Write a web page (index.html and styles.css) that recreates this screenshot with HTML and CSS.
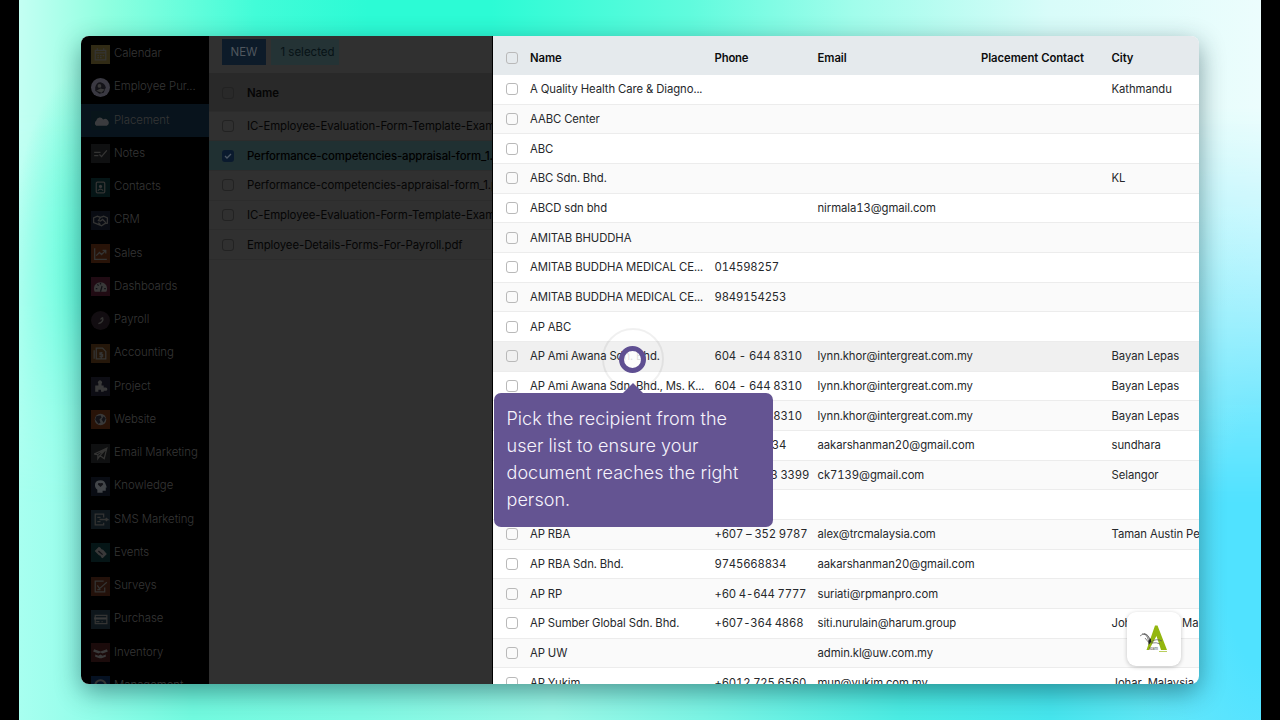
FILE: index.html
```
<!DOCTYPE html>
<html lang="en">
<head>
  <meta charset="UTF-8" />
  <meta name="viewport" content="width=device-width, initial-scale=1" />
  <title>Placement - Select Recipient</title>
  <link rel="stylesheet" href="styles.css">
</head>
<body>
  <div class="backdrop">
    <div class="window">
      <nav class="sidebar">
        <div class="nav-item"><svg class="icon olive" viewBox="0 0 18 18"><path d="M4 5h10v9H4zM6 3v2M12 3v2M4 7.500h10M6 10h1.500M8.500 10H10M11 10h1.500M6 12h1.500M8.500 12H10"/></svg><span>Calendar</span></div>
        <div class="nav-item"><svg class="icon round avatar" viewBox="0 0 18 18"><path class="dark" d="M4 9q1-5 5-5 4 1 5 5l-2 5-4 1-4-3z"/><circle class="fill" cx="8" cy="7.500" r="1.800"/><path class="fill" d="m5 12 4-2 4 1-3 3z"/></svg><span>Employee Pur...</span></div>
        <div class="nav-item active"><svg class="icon green" viewBox="0 0 18 18"><path class="fill" d="M5 14a3 3 0 0 1 0-5 3.500 3.500 0 0 1 6.500-1A3 3 0 0 1 15 14z"/></svg><span>Placement</span></div>
        <div class="nav-item"><svg class="icon grey" viewBox="0 0 18 18"><path d="M3 8h6M3 11h4M8 10l2 2 5-6"/></svg><span>Notes</span></div>
        <div class="nav-item"><svg class="icon teal" viewBox="0 0 18 18"><rect x="5" y="4" width="8" height="10" rx="1"/><circle class="fill" cx="9" cy="8" r="1.500"/><path d="M6.500 12q2.500-3 5 0"/></svg><span>Contacts</span></div>
        <div class="nav-item"><svg class="icon navy" viewBox="0 0 18 18"><path d="M2.500 6.500 6 5l3 1 3-1 3.500 1.500v5L13 12l-3 2-5-2-2.500-1zM9 6 7 9l2 .5 2-1.500 3 3M7 11l2 2"/></svg><span>CRM</span></div>
        <div class="nav-item"><svg class="icon orange" viewBox="0 0 18 18"><path d="M3.500 4v10.500H15M5 11l3-3 2 2 4-4M11 6h3v3"/></svg><span>Sales</span></div>
        <div class="nav-item"><svg class="icon magenta" viewBox="0 0 18 18"><path class="fill" d="M3.500 14a6.200 6.200 0 1 1 11 0z"/><path class="dark-line" d="m9 14 1.500-5.500M4.500 11H6M6 7l1.200 1.200M12.500 11H14M9 5.500V7"/></svg><span>Dashboards</span></div>
        <div class="nav-item"><svg class="icon round plum" viewBox="0 0 18 18"><path d="M11 6c1 3-1 5-4 6M9 8l2-2"/></svg><span>Payroll</span></div>
        <div class="nav-item"><svg class="icon amber" viewBox="0 0 18 18"><path d="M5 4h6l3 3v7H5zM3 6v8M11 8.500H8.500V10H11v2H8M9.700 7.500v6"/></svg><span>Accounting</span></div>
        <div class="nav-item"><svg class="icon slate" viewBox="0 0 18 18"><path class="fill" d="M4 8h3V6.500a2 2 0 1 1 3 0V8h2v2h2a1.500 1.500 0 1 1 0 3h-2v1H9.500v-2H7v2H4z"/></svg><span>Project</span></div>
        <div class="nav-item"><svg class="icon orange" viewBox="0 0 18 18"><circle class="fill" cx="9" cy="9" r="5.500"/><path class="dark" d="m5 6 4-1 1 2-2 2 1 3-2 1-3-4zM12 6l2 2-2 4-2-3z"/></svg><span>Website</span></div>
        <div class="nav-item"><svg class="icon grey" viewBox="0 0 18 18"><path d="m3 9.500 12-5.500-2.500 10-4-3L15 4 6.500 10v4l2-3M3 9.500l3.500.5"/></svg><span>Email Marketing</span></div>
        <div class="nav-item"><svg class="icon navy" viewBox="0 0 18 18"><path class="fill bright" d="M6 15v-3Q3 10 4 6q1-3 5-3t5 4l1 3h-1v3h-3v2z"/><path class="dark" d="M9 9.500 6.500 7q0-2 2.500-1 2.500-1 2.500 1z"/></svg><span>Knowledge</span></div>
        <div class="nav-item"><svg class="icon steel" viewBox="0 0 18 18"><path d="M12 7V4H4v10h8v-2M6 7h3M6 11h3M8 9h8l-2-1.500M16 9l-2 1.500"/></svg><span>SMS Marketing</span></div>
        <div class="nav-item"><svg class="icon teal" viewBox="0 0 18 18"><path class="fill" d="m3.500 7.500 4-4 1.500 1 1 1.500 1.500.5 3.500 4-4 4-1.500-1-.5-1.500-1.500-.5z"/><path class="dark-line" d="m7 7.500 4 3.500"/></svg><span>Events</span></div>
        <div class="nav-item"><svg class="icon rust" viewBox="0 0 18 18"><path d="M12 4H4v10h9v-4M6 8l2 3 7-6M6 12h3"/></svg><span>Surveys</span></div>
        <div class="nav-item"><svg class="icon steel" viewBox="0 0 18 18"><path d="M4 5h11v8H4z"/><path class="fill" d="M3 7h12v2H3z"/><path d="M5 11h3M10 11h1"/></svg><span>Purchase</span></div>
        <div class="nav-item"><svg class="icon maroon" viewBox="0 0 18 18"><path class="fill" d="m3 6 6 2 6-2 1 2-5 2-2-1-2 1-5-2zM4 11l3 1 2-1 2 1 3-1v2l-4 1.500h-2L4 13z"/></svg><span>Inventory</span></div>
        <div class="nav-item"><svg class="icon blue" viewBox="0 0 18 18"><circle class="ring" cx="9" cy="9" r="5"/></svg><span>Management</span></div>
      </nav>

      <section class="documents">
        <div class="toolbar">
          <span class="new-button">NEW</span>
          <span class="selected-count">1 selected</span>
        </div>
        <div class="doc-row doc-head"><i class="check"></i><span>Name</span></div>
        <div class="doc-row"><i class="check"></i><span>IC-Employee-Evaluation-Form-Template-Example.pdf</span></div>
        <div class="doc-row selected"><i class="check checked"><svg viewBox="0 0 12 12"><path d="m3 6 2 2 4-4"/></svg></i><span>Performance-competencies-appraisal-form_1.pdf</span></div>
        <div class="doc-row"><i class="check"></i><span>Performance-competencies-appraisal-form_1.pdf</span></div>
        <div class="doc-row"><i class="check"></i><span>IC-Employee-Evaluation-Form-Template-Example.pdf</span></div>
        <div class="doc-row"><i class="check"></i><span>Employee-Details-Forms-For-Payroll.pdf</span></div>
      </section>

      <section class="recipients">
        <div class="row head"><i class="check"></i><span>Name</span><span>Phone</span><span>Email</span><span>Placement Contact</span><span>City</span></div>
        <div class="row"><i class="check"></i><span>A Quality Health Care &amp; Diagno...</span><span></span><span></span><span></span><span>Kathmandu</span></div>
        <div class="row"><i class="check"></i><span>AABC Center</span></div>
        <div class="row"><i class="check"></i><span>ABC</span></div>
        <div class="row"><i class="check"></i><span>ABC Sdn. Bhd.</span><span></span><span></span><span></span><span>KL</span></div>
        <div class="row"><i class="check"></i><span>ABCD sdn bhd</span><span></span><span>nirmala13@gmail.com</span></div>
        <div class="row"><i class="check"></i><span>AMITAB BHUDDHA</span></div>
        <div class="row"><i class="check"></i><span>AMITAB BUDDHA MEDICAL CE...</span><span>014598257</span></div>
        <div class="row"><i class="check"></i><span>AMITAB BUDDHA MEDICAL CE...</span><span>9849154253</span></div>
        <div class="row"><i class="check"></i><span>AP ABC</span></div>
        <div class="row hovered"><i class="check"></i><span>AP Ami Awana Sdn. Bhd.</span><span>604 - 644 8310</span><span>lynn.khor@intergreat.com.my</span><span></span><span>Bayan Lepas</span></div>
        <div class="row"><i class="check"></i><span>AP Ami Awana Sdn. Bhd., Ms. K...</span><span>604 - 644 8310</span><span>lynn.khor@intergreat.com.my</span><span></span><span>Bayan Lepas</span></div>
        <div class="row"><i class="check"></i><span></span><span>604 - 644 8310</span><span>lynn.khor@intergreat.com.my</span><span></span><span>Bayan Lepas</span></div>
        <div class="row"><i class="check"></i><span></span><span>9745668834</span><span>aakarshanman20@gmail.com</span><span></span><span>sundhara</span></div>
        <div class="row"><i class="check"></i><span></span><span>+60 12 543 3399</span><span>ck7139@gmail.com</span><span></span><span>Selangor</span></div>
        <div class="row"><i class="check"></i></div>
        <div class="row"><i class="check"></i><span>AP RBA</span><span>+607 – 352 9787</span><span>alex@trcmalaysia.com</span><span></span><span>Taman Austin Perdana</span></div>
        <div class="row"><i class="check"></i><span>AP RBA Sdn. Bhd.</span><span>9745668834</span><span>aakarshanman20@gmail.com</span></div>
        <div class="row"><i class="check"></i><span>AP RP</span><span>+60 4-644 7777</span><span>suriati@rpmanpro.com</span></div>
        <div class="row"><i class="check"></i><span>AP Sumber Global Sdn. Bhd.</span><span>+607-364 4868</span><span>siti.nurulain@harum.group</span><span></span><span>Johor Bahru, Malaysia</span></div>
        <div class="row"><i class="check"></i><span>AP UW</span><span></span><span>admin.kl@uw.com.my</span></div>
        <div class="row"><i class="check"></i><span>AP Yukim</span><span>+6012 725 6560</span><span>mun@yukim.com.my</span><span></span><span>Johar, Malaysia</span></div>
      </section>

      <div class="halo"></div>
      <div class="pointer"></div>
      <div class="tooltip">Pick the recipient from the user list to ensure your document reaches the right person.</div>

      <div class="brand">
        <svg viewBox="0 0 54 54">
          <path class="leg" d="m28 13.500h2.500L40 38h-6l-4.500-14L22 38h-2.500z"/>
          <path class="wing" d="M13 24q6-6 9 6M15 22q6-1 8 7M17 21.500q5 1 6 7M24 30q5-4 11-1M24 31q6-1 9 1M18 26l5 6"/>
          <path class="bird" d="m21.500 29 2.500-3v4L21.500 33z"/>
          <text x="22" y="38">leam</text>
          <path class="line" d="M32 39.500h8"/>
        </svg>
      </div>
    </div>
  </div>
</body>
</html>
```

FILE: styles.css
```
* {
  box-sizing: border-box;
}
body {
  margin: 0;
  background: #000;
  font-family: Inter, "Liberation Sans", sans-serif;
  overflow: hidden;
}
.backdrop {
  position: relative;
  width: 1242px;
  height: 720px;
  margin: 0 auto;
  padding: 36px 62px;
  background:
    radial-gradient(ellipse 130px 420px at 100% 75%, #50e2ff 30%, transparent 100%),
    linear-gradient(90deg, #a8fff0, #72fbe0 14%, #80fae4 27%, #9af9e8 43%, #7cf5e5 55%, #4bede4 71%, #46e6ee 83%, #7aeaff);
}
.backdrop::before {
  content: "";
  position: absolute;
  inset: 0;
  background:
    radial-gradient(ellipse 75px 230px at 5% 42%, #3dfbd3, transparent 100%),
    linear-gradient(90deg, #c4fff3, #90ffe0 7%, #42fcd8 19%, #2cfbd5 28%, #2cfbd5 38%, #60fbdd 54%, #a0fdeb 67%, #d8fcf9 83%, #ecfdfd);
  -webkit-mask-image: linear-gradient(#000 15%, transparent 70%);
  mask-image: linear-gradient(#000 15%, transparent 70%);
}
.window {
  position: relative;
  display: flex;
  width: 1118px;
  height: 648px;
  border-radius: 8px;
  overflow: hidden;
  background: #fff;
  box-shadow: 0 8px 26px rgba(0, 40, 50, 0.46);
}

/* sidebar */
.sidebar {
  flex: none;
  width: 128px;
  padding-top: 1.5px;
  background: #000;
}
.nav-item {
  display: flex;
  align-items: center;
  gap: 4px;
  height: 33.25px;
  padding-left: 10px;
  color: #363636;
  font-size: 11.4px;
  font-weight: 300;
  letter-spacing: -0.03px;
  white-space: nowrap;
}
.nav-item span {
  position: relative;
  top: -1px;
}
.nav-item.active {
  background: #08131c;
}
.icon {
  flex: none;
  width: 19px;
  height: 19px;
  fill: none;
  stroke: #3e3e3d;
  stroke-width: 1.2;
  opacity: 0.85;
}
.icon.round {
  border-radius: 50%;
}
.icon .fill {
  fill: #444;
  stroke: none;
}
.icon .bright {
  fill: #4e5256;
}
.icon .dark {
  fill: #17171d;
  stroke: none;
}
.icon .dark-line {
  stroke: #15151a;
}
.icon .ring {
  stroke-width: 2;
}
.olive { background: #3a3319; }
.avatar { background: #45444e; }
.green { background: #08161a; }
.grey { background: #121314; }
.teal { background: #07191b; }
.navy { background: #0b0f17; }
.orange { background: #30170a; }
.magenta { background: #260d17; }
.plum { background: #161014; }
.amber { background: #2c1c0c; }
.slate { background: #101018; }
.steel { background: #111b20; }
.rust { background: #2a150c; }
.maroon { background: #200d0d; }
.blue { background: #071429; }

/* documents list */
.documents {
  flex: none;
  width: 283.5px;
  background: #303030;
  border-right: 1px solid #000;
  overflow: hidden;
}
.toolbar {
  display: flex;
  gap: 5px;
  height: 37px;
  padding: 3px 0 0 13px;
  font-size: 11.5px;
}
.new-button,
.selected-count {
  height: 26px;
  line-height: 26px;
  text-align: center;
}
.new-button {
  width: 44px;
  background: #0d1b29;
  color: #50575e;
}
.selected-count {
  width: 68px;
  padding-left: 5px;
  background: #243335;
  color: #071216;
}
.doc-row {
  display: flex;
  align-items: center;
  gap: 13px;
  height: 29.7px;
  padding-left: 13px;
  border-bottom: 1px solid #2c2c2c;
  color: #050505;
  font-size: 11.4px;
  letter-spacing: -0.08px;
  white-space: nowrap;
}
.doc-head {
  height: 38.5px;
  padding-top: 2px;
  background: #292929;
  font-weight: 600;
}
.doc-row.selected {
  background: #203032;
  color: #000;
  font-weight: 500;
  letter-spacing: -0.12px;
}
.check {
  flex: none;
  width: 12px;
  height: 12px;
  border: 1px solid #b9b9b9;
  border-radius: 3px;
}
.documents .check {
  border-color: #222;
}
.documents .checked {
  border: none;
  background: #0a1a2e;
}
.checked svg {
  display: block;
  fill: none;
  stroke: #4c5763;
  stroke-width: 1.3;
}

/* recipients table */
.recipients {
  flex: 1;
  min-width: 0;
  overflow: hidden;
}
.row {
  display: grid;
  grid-template-columns: 24px 184.5px 103px 163.5px 130.5px 120px;
  align-items: center;
  height: 29.68px;
  padding-left: 13.5px;
  border-bottom: 1px solid #ececec;
  color: #26282b;
  font-size: 11.3px;
  letter-spacing: -0.06px;
  font-variant-numeric: tabular-nums;
  white-space: nowrap;
}
.row span:nth-child(3) {
  letter-spacing: -0.16px;
}
.row:nth-child(odd) {
  background: #fafafa;
}
.row.head {
  height: 39px;
  padding-top: 4px;
  background: #e5eaed;
  border-bottom: none;
  color: #0c0d0e;
  font-weight: 600;
}
.row.hovered {
  background: #f0f0f0;
}

/* guide overlay */
.halo {
  position: absolute;
  left: 521px;
  top: 292px;
  width: 62px;
  height: 62px;
  border: 2px solid rgba(0, 0, 0, 0.06);
  border-radius: 50%;
}
.pointer {
  position: absolute;
  left: 538px;
  top: 310px;
  width: 27px;
  height: 27px;
  border: 5px solid #5f4f92;
  border-radius: 50%;
  background: rgba(255, 255, 255, 0.85);
}
.tooltip {
  position: absolute;
  left: 412.5px;
  top: 357px;
  width: 279px;
  height: 134px;
  padding: 12px 13px;
  border-radius: 7px;
  background: #645492;
  color: #f6f3fc;
  font-size: 18px;
  font-weight: 350;
  letter-spacing: 0.05px;
  line-height: 27px;
}
.tooltip::before {
  content: "";
  position: absolute;
  left: 128px;
  top: -10px;
  border: 11px solid transparent;
  border-top: none;
  border-bottom-color: #645492;
}
.brand {
  position: absolute;
  right: 18px;
  bottom: 18px;
  width: 54px;
  height: 54px;
  border-radius: 9px;
  background: #fff;
  box-shadow: 0 1px 4px rgba(0, 0, 0, 0.22);
}
.brand svg {
  display: block;
}
.brand .leg {
  fill: #93b60f;
}
.brand .wing {
  fill: none;
  stroke: #555;
  stroke-width: 0.7;
}
.brand .bird {
  fill: #222;
}
.brand .line {
  stroke: #b9cf5e;
}
.brand text {
  font-size: 4px;
  fill: #444;
}
```
